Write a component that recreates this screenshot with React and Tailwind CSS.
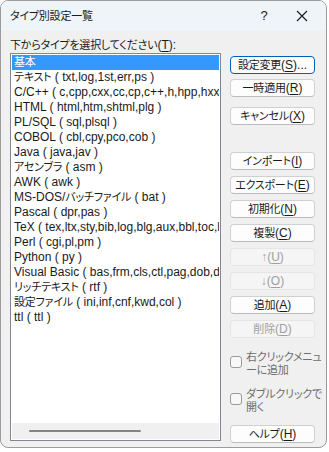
import React from "react";

const FONT = {
  fontFamily: '"Liberation Sans", "Noto Sans CJK JP", sans-serif',
};

const CJK = /([\u3000-\u30ff\u4e00-\u9fff\uff00-\uffef]+)/;

function J({ t }) {
  const parts = t.split(CJK);
  return (
    <>
      {parts.map((p, i) =>
        i % 2 === 1 ? (
          <span key={i} className="text-[11px] tracking-[-0.2px]">
            {p}
          </span>
        ) : (
          <React.Fragment key={i}>{p}</React.Fragment>
        )
      )}
    </>
  );
}

const items = [
  "基本",
  "テキスト ( txt,log,1st,err,ps )",
  "C/C++ ( c,cpp,cxx,cc,cp,c++,h,hpp,hxx )",
  "HTML ( html,htm,shtml,plg )",
  "PL/SQL ( sql,plsql )",
  "COBOL ( cbl,cpy,pco,cob )",
  "Java ( java,jav )",
  "アセンブラ ( asm )",
  "AWK ( awk )",
  "MS-DOS/バッチファイル ( bat )",
  "Pascal ( dpr,pas )",
  "TeX ( tex,ltx,sty,bib,log,blg,aux,bbl,toc,lof,lot,idx,ind,glo )",
  "Perl ( cgi,pl,pm )",
  "Python ( py )",
  "Visual Basic ( bas,frm,cls,ctl,pag,dob,dsr,vb )",
  "リッチテキスト ( rtf )",
  "設定ファイル ( ini,inf,cnf,kwd,col )",
  "ttl ( ttl )",
];

function Btn({ label, mn, tail = "", def, disabled, className = "" }) {
  const base =
    "h-[18px] w-[85px] rounded-[4px] flex items-center justify-center text-[12px] leading-none whitespace-nowrap";
  const look = disabled
    ? "bg-[#f5f5f5] border border-[#e5e5e5] text-[#a0a0a0]"
    : def
    ? "bg-[#fdfdfd] border border-[#005fb8] text-[#1a1a1a]"
    : "bg-[#fdfdfd] border border-[#d0d0d0] border-b-[#bcbcbc] text-[#1a1a1a]";
  return (
    <div className={`${base} ${look} ${className}`}>
      <span>
        <J t={label} />(<u className="underline-offset-2">{mn}</u>){tail}
      </span>
    </div>
  );
}

function Check({ lines, className = "" }) {
  return (
    <div className={`flex items-start ${className}`}>
      <div className="mt-[5px] w-[12px] h-[12px] rounded-[3px] border border-[#9a9a9a] bg-[#f7f7f7] shrink-0" />
      <div className="ml-[4px] text-[12px] leading-[12.5px] text-[#6d6d6d] whitespace-nowrap">
        {lines.map((l, i) => (
          <div key={i}>
            <J t={l} />
          </div>
        ))}
      </div>
    </div>
  );
}

export default function App() {
  return (
    <div
      className="w-[329px] h-[452px] bg-white [font-feature-settings:'palt']"
      style={FONT}
    >
      <div className="w-[327px] h-[448px] rounded-[8px] border border-[#9b9b9b] overflow-hidden flex flex-col bg-[#f0f0f0]">
        <div className="h-[30px] bg-[#eff4f9] flex items-center pl-[9px] text-[12px] text-[#1a1a1a] shrink-0">
          <span className="flex-1">
            <J t="タイプ別設定一覧" />
          </span>
          <span className="text-[13px] w-[20px] text-center mr-[22px]">?</span>
          <svg width="12" height="12" viewBox="0 0 12 12" className="mr-[18px]">
            <path d="M1 1 L11 11 M11 1 L1 11" stroke="#1a1a1a" strokeWidth="1.1" />
          </svg>
        </div>
        <div className="flex flex-1 pl-[9px]">
          <div className="w-[211px] pt-[7px] flex flex-col">
            <div className="h-[15px] leading-[15px] text-[12px] text-[#1a1a1a] whitespace-nowrap">
              <J t="下からタイプを選択してください" />(<u className="underline-offset-2">T</u>):
            </div>
            <div className="h-[388px] border border-[#828790] bg-white flex flex-col">
              <div className="flex-1 pt-[1px] px-[1px] overflow-hidden">
                {items.map((t, i) => (
                  <div
                    key={i}
                    className={`h-[15px] leading-[15px] text-[12px] pl-[2px] whitespace-nowrap overflow-hidden ${
                      i === 0 ? "bg-[#3399ff] text-white" : "text-[#1a1a1a]"
                    }`}
                  >
                    <J t={t} />
                  </div>
                ))}
              </div>
              <div className="h-[16px] mx-[1px] mb-[1px] bg-[#f0f0f0] flex items-center">
                <div className="ml-[17px] w-[112px] h-[2px] rounded-full bg-[#858585]" />
              </div>
            </div>
          </div>
          <div className="ml-[9px] w-[85px] pt-[25px] flex flex-col">
            <Btn label="設定変更" mn="S" tail="..." def />
            <Btn label="一時適用" mn="R" className="mt-[5px]" />
            <Btn label="キャンセル" mn="X" className="mt-[10px]" />
            <div className="mt-[27px] flex flex-col gap-[6px]">
              <Btn label="インポート" mn="I" />
              <Btn label="エクスポート" mn="E" />
              <Btn label="初期化" mn="N" />
              <Btn label="複製" mn="C" />
              <Btn label="↑" mn="U" disabled />
              <Btn label="↓" mn="O" disabled />
              <Btn label="追加" mn="A" />
              <Btn label="削除" mn="D" disabled />
            </div>
            <Check lines={["右クリックメニュ", "ーに追加"]} className="mt-[13px]" />
            <Check lines={["ダブルクリックで", "開く"]} className="mt-[12px]" />
            <Btn label="ヘルプ" mn="H" className="mt-[12px]" />
          </div>
        </div>
      </div>
    </div>
  );
}
